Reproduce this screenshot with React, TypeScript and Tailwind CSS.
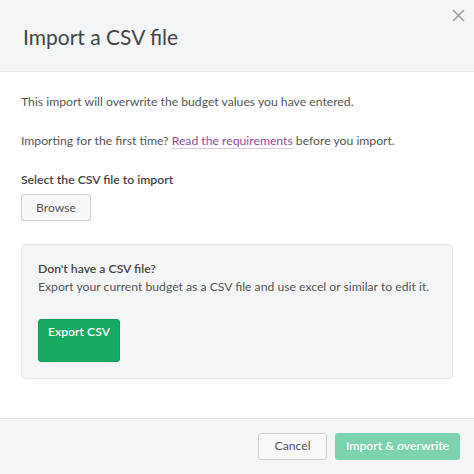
export default function App() {
  return (
    <div
      className="w-[474px] h-[474px] bg-white flex flex-col text-[12.2px] text-[#555] overflow-hidden"
      style={{ fontFamily: 'Lato, "Noto Sans", sans-serif' }}
    >
      {/* header */}
      <div className="relative h-[72px] shrink-0 bg-[#f4f5f6] border-b border-[#e2e4e7] pl-[23px] pt-[23px]">
        <h1 className="text-[21px] leading-[28px] text-[#454545]">Import a CSV file</h1>
        <button className="absolute right-[9px] top-[9px] w-[13px] h-[13px] text-[#9a9a9a]">
          <svg viewBox="0 0 13 13" className="w-[13px] h-[13px]" fill="none" stroke="currentColor" strokeWidth="1.5">
            <path d="M1 1l11 11M12 1L1 12" />
          </svg>
        </button>
      </div>

      {/* body */}
      <div className="flex-1 px-[21px] pt-[20px] leading-[20px]">
        <p>This import will overwrite the budget values you have entered.</p>
        <p className="mt-[19px]">
          Importing for the first time?{" "}
          <a className="text-[#8a4f9e] border-b border-[#dccbe2]">Read the requirements</a> before you import.
        </p>
        <p className="mt-[19px] font-semibold text-[#444]">Select the CSV file to import</p>
        <button className="mt-[4px] w-[70px] h-[27px] rounded-[3px] border border-[#cfcfcf] bg-[#f8f8f8] text-[#555] shadow-[0_1px_1px_rgba(0,0,0,0.04)]">
          Browse
        </button>

        <div className="mt-[23px] h-[135px] rounded-[4px] border border-[#e6e7e9] bg-[#f4f5f6] pl-[16px] pt-[15px] leading-[18px]">
          <p className="font-semibold text-[#444]">Don't have a CSV file?</p>
          <p>Export your current budget as a CSV file and use excel or similar to edit it.</p>
          <button className="mt-[23px] w-[82px] h-[43px] rounded-[3px] border border-[#129c58] bg-[#17aa63] text-white font-semibold pt-[3px] flex justify-center items-start">
            Export CSV
          </button>
        </div>
      </div>

      {/* footer */}
      <div className="h-[56px] shrink-0 bg-[#f4f5f6] border-t border-[#e2e4e7] flex justify-end items-start pt-[14px] pr-[14px] gap-[8px]">
        <button className="w-[69px] h-[27px] rounded-[3px] border border-[#cfcfcf] bg-[#f9f9f9] text-[#555]">
          Cancel
        </button>
        <button className="w-[125px] h-[27px] rounded-[3px] bg-[#7dd3ad] text-white font-semibold">
          Import &amp; overwrite
        </button>
      </div>
    </div>
  );
}
